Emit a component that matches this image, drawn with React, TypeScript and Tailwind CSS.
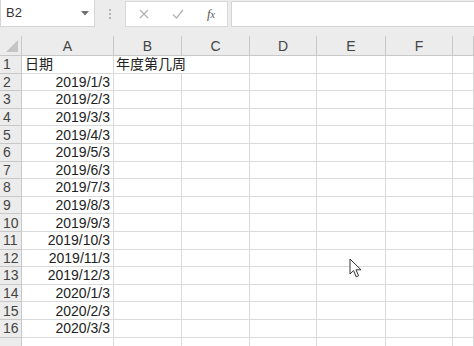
import React from 'react';

const COLS = ['A', 'B', 'C', 'D', 'E', 'F', ''];
const DATES = [
  '2019/1/3', '2019/2/3', '2019/3/3', '2019/4/3', '2019/5/3', '2019/6/3', '2019/7/3',
  '2019/8/3', '2019/9/3', '2019/10/3', '2019/11/3', '2019/12/3', '2020/1/3', '2020/2/3',
  '2020/3/3',
];

const grid = 'grid grid-cols-[22px_92px_68px_68px_67px_69px_67px_1fr]';
const font = { fontFamily: '"Liberation Sans", "Noto Sans CJK SC", sans-serif' };

function Toolbar() {
  return (
    <div className="flex h-[36px] items-start bg-[#ececec]">
      <div className="flex h-[27px] w-[95px] items-center justify-between border border-t-0 border-[#d4d4d4] bg-white pl-[5px] pr-[5px] text-[13px] text-[#333]">
        <span>B2</span>
        <svg width="8" height="5" viewBox="0 0 8 5"><path d="M0 0h8L4 4.5z" fill="#707070" /></svg>
      </div>
      <div className="flex h-[27px] w-[30px] flex-col items-center justify-center gap-[2px]">
        <span className="h-[2px] w-[2px] bg-[#b4b4b4]" />
        <span className="h-[2px] w-[2px] bg-[#b4b4b4]" />
        <span className="h-[2px] w-[2px] bg-[#b4b4b4]" />
      </div>
      <div className="mt-[1px] flex h-[26px] w-[103px] items-center border border-[#d9d9d9] bg-white">
        <div className="flex w-[35px] justify-center">
          <svg width="10" height="10" viewBox="0 0 10 10">
            <path d="M1 1l8 8M9 1l-8 8" stroke="#b3b3b3" strokeWidth="1.3" />
          </svg>
        </div>
        <div className="flex w-[34px] justify-center">
          <svg width="12" height="10" viewBox="0 0 12 10">
            <path d="M1 5.5l3.5 3.5L11 1" stroke="#b3b3b3" strokeWidth="1.3" fill="none" />
          </svg>
        </div>
        <div className="flex w-[32px] justify-center">
          <span className="text-[13px] italic text-[#555]" style={{ fontFamily: '"Liberation Serif", serif' }}>
            f<span className="text-[10px]">x</span>
          </span>
        </div>
      </div>
      <div className="ml-[3px] mt-[1px] h-[26px] flex-1 border border-r-0 border-[#d4d4d4] bg-white" />
    </div>
  );
}

function HeaderRow() {
  return (
    <div className={`${grid} h-[20px] bg-[#ececec] text-[14px] text-[#444]`}>
      <div className="relative border-r border-b border-[#c8c8c8]">
        <svg className="absolute bottom-[3px] right-[3px]" width="12" height="12" viewBox="0 0 12 12">
          <path d="M12 0V12H0z" fill="#c4c4c4" />
        </svg>
      </div>
      {COLS.map((c, i) => (
        <div key={i} className="flex items-center justify-center border-r border-b border-[#c8c8c8] leading-none">
          {c}
        </div>
      ))}
    </div>
  );
}

function Row({ n, children }: { n?: number; children: React.ReactNode }) {
  return (
    <div className={`${grid} h-[17.6px] text-[14px] text-[#222]`}>
      <div className="flex items-center border-r border-b border-[#c8c8c8] bg-[#ececec] pl-[3px] leading-none text-[#444]">
        {n}
      </div>
      {children}
    </div>
  );
}

const cell = 'flex items-center border-r border-b border-[#dadada] leading-none whitespace-nowrap';

function EmptyCells() {
  return (
    <>
      <div className={cell} />
      <div className={cell} />
      <div className={cell} />
      <div className={cell} />
      <div className={cell} />
      <div className={cell} />
    </>
  );
}

export default function App() {
  return (
    <div className="relative h-[346px] w-[474px] overflow-hidden bg-white" style={font}>
      <Toolbar />
      <HeaderRow />
      <Row n={1}>
        <div className={`${cell} pl-[3px]`}>日期</div>
        <div className={`${cell} border-r-0 pl-[2px] overflow-visible`}>年度第几周</div>
        <div className={cell} />
        <div className={cell} />
        <div className={cell} />
        <div className={cell} />
        <div className={cell} />
      </Row>
      {DATES.map((d, i) => (
        <Row key={i} n={i + 2}>
          <div className={`${cell} justify-end pr-[3px]`}>{d}</div>
          <EmptyCells />
        </Row>
      ))}
      {/* row 17 is cut off by the window, its number is not visible */}
      <Row>
        <div className={cell} />
        <EmptyCells />
      </Row>
      <svg className="absolute left-[349px] top-[258px]" width="14" height="21" viewBox="0 0 14 21">
        <path d="M1 1v15l3.6-3.4 2.6 6.2 2.4-1-2.6-6H12z" fill="white" stroke="#333" strokeWidth="1" strokeLinejoin="round" />
      </svg>
    </div>
  );
}
